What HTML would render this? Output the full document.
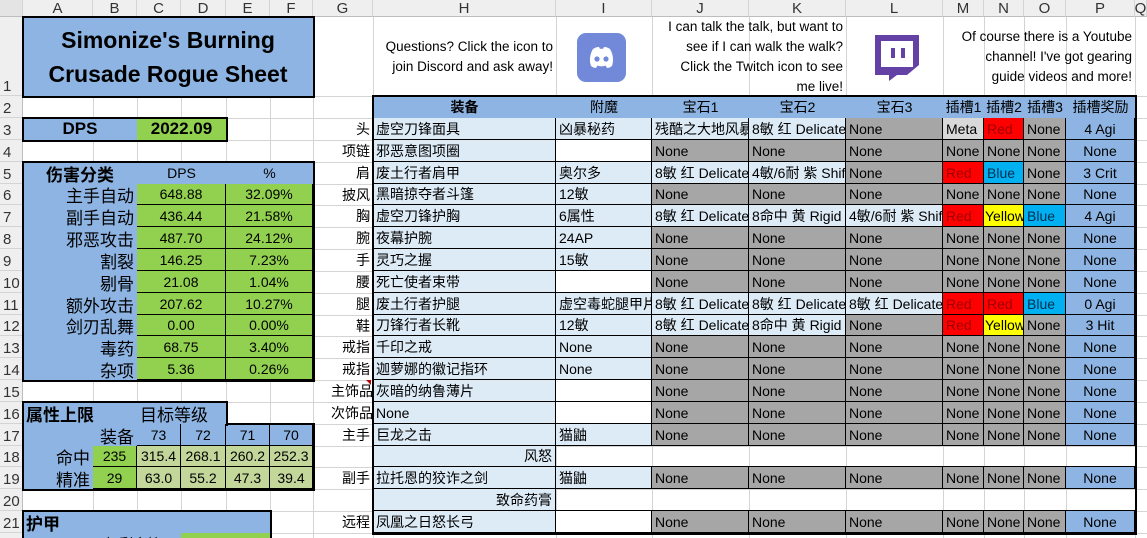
<!DOCTYPE html>
<html style="width:1147px;height:538px;overflow:hidden"><head><meta charset="utf-8"><style>
*{margin:0;padding:0}
body{width:1147px;height:538px;overflow:hidden;background:#fff;position:relative;font-family:"Liberation Sans","Noto Sans CJK SC",sans-serif;font-size:14px;color:#000}
.c{position:absolute;box-sizing:border-box;display:flex;align-items:center;white-space:nowrap;overflow:hidden;padding:0 3px}
.vl{position:absolute;top:0;width:1px;height:538px;background:#d4d4d4}
.hl{position:absolute;left:0;height:1px;width:1147px;background:#d4d4d4}
.tb{position:absolute;box-sizing:border-box;border:2px solid #000;pointer-events:none}
.ca{left:23px;width:70px}.cb{left:93px;width:44px}.cc{left:137px;width:44px}.cd{left:181px;width:45px}.ce{left:226px;width:44px}.cf{left:270px;width:43px}
.cg{left:313px;width:60px}.ch{left:373px;width:183px}.ci{left:556px;width:96px}.cj{left:652px;width:97px}.ck{left:749px;width:97px}.cl{left:846px;width:97px}
.cm{left:943px;width:41px}.cn{left:984px;width:40px}.co{left:1024px;width:42px}.cp{left:1066px;width:69px}
.r2{top:96px;height:22px}.r3{top:118px;height:22px}.r4{top:140px;height:22px}.r5{top:162px;height:22px}.r6{top:184px;height:21px}.r7{top:205px;height:22px}.r8{top:227px;height:22px}.r9{top:249px;height:22px}.r10{top:271px;height:22px}.r11{top:293px;height:22px}.r12{top:315px;height:21px}.r13{top:336px;height:22px}.r14{top:358px;height:22px}.r15{top:380px;height:22px}.r16{top:402px;height:22px}.r17{top:424px;height:22px}.r18{top:446px;height:21px}.r19{top:467px;height:22px}.r20{top:489px;height:22px}.r21{top:511px;height:22px}.r22{top:533px;height:22px}
.lb{background:#ddebf7}.gy{background:#a6a6a6}.bl{background:#8db4e2}.gr{background:#92d050}.lg{background:#c4d79b}.mt{background:#d9d9d9}.rd{background:#ff0000;color:#a00000}.bu{background:#00b0f0;color:#003050}.ye{background:#ffff00}.wh{background:#fff}
.bd{border-right:1px solid #000;border-bottom:1px solid #000}
.R{justify-content:flex-end}.C{justify-content:center}.B{font-weight:bold}
.hd{position:absolute;top:0;height:17px;background:#efefef;border-bottom:1px solid #bdbdbd;display:flex;align-items:center;justify-content:center;font-size:15px;color:#333;box-sizing:border-box;border-right:1px solid #d4d4d4}
.rn{position:absolute;left:0;width:23px;background:#efefef;font-size:15px;color:#333;box-sizing:border-box;border-right:1px solid #bdbdbd;border-bottom:1px solid #d4d4d4;display:flex;align-items:flex-end;padding-left:3px}
.t16{font-size:17px}
</style></head><body>
<div class="vl" style="left:93px"></div><div class="vl" style="left:137px"></div><div class="vl" style="left:181px"></div><div class="vl" style="left:226px"></div><div class="vl" style="left:270px"></div><div class="vl" style="left:313px"></div><div class="vl" style="left:373px"></div><div class="vl" style="left:556px"></div><div class="vl" style="left:652px"></div><div class="vl" style="left:749px"></div><div class="vl" style="left:846px"></div><div class="vl" style="left:943px"></div><div class="vl" style="left:984px"></div><div class="vl" style="left:1024px"></div><div class="vl" style="left:1066px"></div><div class="vl" style="left:1135px"></div>
<div class="hl" style="top:96px"></div><div class="hl" style="top:118px"></div><div class="hl" style="top:140px"></div><div class="hl" style="top:162px"></div><div class="hl" style="top:184px"></div><div class="hl" style="top:205px"></div><div class="hl" style="top:227px"></div><div class="hl" style="top:249px"></div><div class="hl" style="top:271px"></div><div class="hl" style="top:293px"></div><div class="hl" style="top:315px"></div><div class="hl" style="top:336px"></div><div class="hl" style="top:358px"></div><div class="hl" style="top:380px"></div><div class="hl" style="top:402px"></div><div class="hl" style="top:424px"></div><div class="hl" style="top:446px"></div><div class="hl" style="top:467px"></div><div class="hl" style="top:489px"></div><div class="hl" style="top:511px"></div><div class="hl" style="top:533px"></div>

<div class="hd" style="left:0;width:23px;background:#e4e4e4"></div>
<div class="hd" style="left:23px;width:70px">A</div><div class="hd" style="left:93px;width:44px">B</div><div class="hd" style="left:137px;width:44px">C</div><div class="hd" style="left:181px;width:45px">D</div><div class="hd" style="left:226px;width:44px">E</div><div class="hd" style="left:270px;width:43px">F</div><div class="hd" style="left:313px;width:60px">G</div><div class="hd" style="left:373px;width:183px">H</div><div class="hd" style="left:556px;width:96px">I</div><div class="hd" style="left:652px;width:97px">J</div><div class="hd" style="left:749px;width:97px">K</div><div class="hd" style="left:846px;width:97px">L</div><div class="hd" style="left:943px;width:41px">M</div><div class="hd" style="left:984px;width:40px">N</div><div class="hd" style="left:1024px;width:42px">O</div><div class="hd" style="left:1066px;width:69px">P</div><div class="hd" style="left:1135px;width:12px">Q</div>
<div class="rn" style="top:17px;height:79px">1</div>
<div class="rn r2">2</div><div class="rn r3">3</div><div class="rn r4">4</div><div class="rn r5">5</div><div class="rn r6">6</div><div class="rn r7">7</div><div class="rn r8">8</div><div class="rn r9">9</div><div class="rn r10">10</div><div class="rn r11">11</div><div class="rn r12">12</div><div class="rn r13">13</div><div class="rn r14">14</div><div class="rn r15">15</div><div class="rn r16">16</div><div class="rn r17">17</div><div class="rn r18">18</div><div class="rn r19">19</div><div class="rn r20">20</div><div class="rn r21">21</div><div class="rn r22">22</div>

<div class="c C B bl" style="left:23px;top:17px;width:290px;height:79px;font-size:23px;line-height:34px;white-space:normal;text-align:center">Simonize's Burning<br>Crusade Rogue Sheet</div>
<div class="tb" style="left:22px;top:16px;width:293px;height:82px"></div>
<div class="c R" style="left:373px;top:17px;width:183px;height:79px;white-space:normal;text-align:right;line-height:20px;font-size:13.5px">Questions? Click the icon to<br>join Discord and ask away!</div>
<svg style="position:absolute;left:577px;top:33px" width="49" height="49" viewBox="0 0 49 49"><rect width="49" height="49" rx="9" fill="#7289da"/><path d="M14 33 C12 27 13 21 16 16 C19 14 21 14 22 14 L23 16 C24 15.5 25 15.5 26 16 L27 14 C28 14 30 14 33 16 C36 21 37 27 35 33 C33 34.5 31 35 30 35 L28.5 32.5 C26 33.5 23 33.5 20.5 32.5 L19 35 C18 35 16 34.5 14 33 Z" fill="#fff"/><circle cx="20" cy="26" r="2.6" fill="#7289da"/><circle cx="29" cy="26" r="2.6" fill="#7289da"/></svg>
<div class="c R" style="left:652px;top:17px;width:194px;height:79px;white-space:normal;text-align:right;line-height:20px;font-size:13.5px;align-items:flex-start">I can talk the talk, but want to<br>see if I can walk the walk?<br>Click the Twitch icon to see<br>me live!</div>
<svg style="position:absolute;left:875px;top:35px" width="44" height="46" viewBox="0 0 44 46"><path d="M0 0 H44 V30 L32 40 H22 L14 46 V40 H0 Z" fill="#6441a5"/><rect x="6" y="6" width="32" height="26" fill="#fff"/><rect x="16" y="13" width="4" height="10" fill="#6441a5"/><rect x="26" y="13" width="4" height="10" fill="#6441a5"/></svg>
<div class="c R" style="left:943px;top:17px;width:192px;height:79px;white-space:normal;text-align:right;line-height:20px;font-size:13.5px">Of course there is a Youtube<br>channel! I've got gearing<br>guide videos and more!</div>

<div class="c C B bl r3" style="left:23px;width:114px;font-size:17px">DPS</div>
<div class="c C B gr r3" style="left:137px;width:89px;font-size:17px">2022.09</div>
<div class="tb" style="left:22px;top:117px;width:206px;height:25px"></div>
<div class="c C B bl r5 t16" style="left:23px;width:114px">伤害分类</div>
<div class="c C bl r5" style="left:137px;width:89px">DPS</div>
<div class="c C bl r5" style="left:226px;width:87px">%</div>
<div class="c bl" style="left:23px;top:184px;width:114px;height:196px"></div>
<div class="c R t16 r6" style="left:23px;width:114px">主手自动</div><div class="c C gr bd r6" style="left:137px;width:89px">648.88</div><div class="c C gr bd r6" style="left:226px;width:87px">32.09%</div>
<div class="c R t16 r7" style="left:23px;width:114px">副手自动</div><div class="c C gr bd r7" style="left:137px;width:89px">436.44</div><div class="c C gr bd r7" style="left:226px;width:87px">21.58%</div>
<div class="c R t16 r8" style="left:23px;width:114px">邪恶攻击</div><div class="c C gr bd r8" style="left:137px;width:89px">487.70</div><div class="c C gr bd r8" style="left:226px;width:87px">24.12%</div>
<div class="c R t16 r9" style="left:23px;width:114px">割裂</div><div class="c C gr bd r9" style="left:137px;width:89px">146.25</div><div class="c C gr bd r9" style="left:226px;width:87px">7.23%</div>
<div class="c R t16 r10" style="left:23px;width:114px">剔骨</div><div class="c C gr bd r10" style="left:137px;width:89px">21.08</div><div class="c C gr bd r10" style="left:226px;width:87px">1.04%</div>
<div class="c R t16 r11" style="left:23px;width:114px">额外攻击</div><div class="c C gr bd r11" style="left:137px;width:89px">207.62</div><div class="c C gr bd r11" style="left:226px;width:87px">10.27%</div>
<div class="c R t16 r12" style="left:23px;width:114px">剑刃乱舞</div><div class="c C gr bd r12" style="left:137px;width:89px">0.00</div><div class="c C gr bd r12" style="left:226px;width:87px">0.00%</div>
<div class="c R t16 r13" style="left:23px;width:114px">毒药</div><div class="c C gr bd r13" style="left:137px;width:89px">68.75</div><div class="c C gr bd r13" style="left:226px;width:87px">3.40%</div>
<div class="c R t16 r14" style="left:23px;width:114px">杂项</div><div class="c C gr bd r14" style="left:137px;width:89px">5.36</div><div class="c C gr bd r14" style="left:226px;width:87px">0.26%</div>
<div class="tb" style="left:22px;top:161px;width:293px;height:221px"></div>

<div class="c B bl r16 t16" style="left:23px;width:114px">属性上限</div>
<div class="c bl r16 t16" style="left:137px;width:89px">目标等级</div>
<div class="c bl" style="left:23px;top:424px;width:114px;height:65px"></div>
<div class="c R t16 r17" style="left:93px;width:44px">装备</div>
<div class="c C bl bd r17" style="left:137px;width:44px">73</div><div class="c C bl bd r17" style="left:181px;width:45px">72</div><div class="c C bl bd r17" style="left:226px;width:44px">71</div><div class="c C bl bd r17" style="left:270px;width:43px">70</div>
<div class="c R t16 r18" style="left:23px;width:70px">命中</div><div class="c C gr bd r18" style="left:93px;width:44px">235</div>
<div class="c C lg bd r18" style="left:137px;width:44px">315.4</div><div class="c C lg bd r18" style="left:181px;width:45px">268.1</div><div class="c C lg bd r18" style="left:226px;width:44px">260.2</div><div class="c C lg bd r18" style="left:270px;width:43px">252.3</div>
<div class="c R t16 r19" style="left:23px;width:70px">精准</div><div class="c C gr bd r19" style="left:93px;width:44px">29</div>
<div class="c C lg bd r19" style="left:137px;width:44px">63.0</div><div class="c C lg bd r19" style="left:181px;width:45px">55.2</div><div class="c C lg bd r19" style="left:226px;width:44px">47.3</div><div class="c C lg bd r19" style="left:270px;width:43px">39.4</div>
<div class="tb" style="left:22px;top:401px;width:206px;height:25px;border-bottom:none"></div>
<div class="tb" style="left:22px;top:423px;width:293px;height:68px;border-top:none"></div>
<div style="position:absolute;left:226px;top:423px;width:89px;height:2px;background:#000"></div>
<div class="c B bl r21 t16" style="left:23px;width:247px">护甲</div>
<div class="c bl r22" style="left:23px;width:158px;padding-left:68px">目标剩余护甲</div>
<div class="c gr r22" style="left:181px;width:89px"></div>
<div class="tb" style="left:22px;top:510px;width:250px;height:40px"></div>

<div class="c C B bl r2" style="left:373px;width:183px">装备</div><div class="c C bl r2" style="left:556px;width:96px">附魔</div><div class="c C bl r2" style="left:652px;width:97px">宝石1</div><div class="c C bl r2" style="left:749px;width:97px">宝石2</div><div class="c C bl r2" style="left:846px;width:97px">宝石3</div><div class="c C bl r2" style="left:943px;width:41px;padding:0">插槽1</div><div class="c C bl r2" style="left:984px;width:40px;padding:0">插槽2</div><div class="c C bl r2" style="left:1024px;width:42px;padding:0">插槽3</div><div class="c C bl r2" style="left:1066px;width:69px">插槽奖励</div>

<div class="c R cg r3">头</div><div class="c R cg r4">项链</div><div class="c R cg r5">肩</div><div class="c R cg r6">披风</div><div class="c R cg r7">胸</div><div class="c R cg r8">腕</div><div class="c R cg r9">手</div><div class="c R cg r10">腰</div><div class="c R cg r11">腿</div><div class="c R cg r12">鞋</div><div class="c R cg r13">戒指</div><div class="c R cg r14">戒指</div><div class="c R cg r15" style="padding:0">主饰品</div><div class="c R cg r16" style="padding:0">次饰品</div><div class="c R cg r17">主手</div><div class="c R cg r19">副手</div><div class="c R cg r21">远程</div>

<div class="c lb bd ch r3">虚空刀锋面具</div><div class="c lb bd ci r3">凶暴秘药</div><div class="c lb bd cj r3">残酷之大地风暴钻</div><div class="c lb bd ck r3">8敏 红 Delicate</div><div class="c gy bd cl r3">None</div><div class="c mt bd cm r3">Meta</div><div class="c rd bd cn r3">Red</div><div class="c gy bd co r3">None</div><div class="c C bl bd cp r3">4 Agi</div>
<div class="c lb bd ch r4">邪恶意图项圈</div><div class="c wh bd ci r4"></div><div class="c gy bd cj r4">None</div><div class="c gy bd ck r4">None</div><div class="c gy bd cl r4">None</div><div class="c gy bd cm r4">None</div><div class="c gy bd cn r4">None</div><div class="c gy bd co r4">None</div><div class="c C bl bd cp r4">None</div>
<div class="c lb bd ch r5">废土行者肩甲</div><div class="c lb bd ci r5">奥尔多</div><div class="c lb bd cj r5">8敏 红 Delicate</div><div class="c lb bd ck r5">4敏/6耐 紫 Shifting</div><div class="c gy bd cl r5">None</div><div class="c rd bd cm r5">Red</div><div class="c bu bd cn r5">Blue</div><div class="c gy bd co r5">None</div><div class="c C bl bd cp r5">3 Crit</div>
<div class="c lb bd ch r6">黑暗掠夺者斗篷</div><div class="c lb bd ci r6">12敏</div><div class="c gy bd cj r6">None</div><div class="c gy bd ck r6">None</div><div class="c gy bd cl r6">None</div><div class="c gy bd cm r6">None</div><div class="c gy bd cn r6">None</div><div class="c gy bd co r6">None</div><div class="c C bl bd cp r6">None</div>
<div class="c lb bd ch r7">虚空刀锋护胸</div><div class="c lb bd ci r7">6属性</div><div class="c lb bd cj r7">8敏 红 Delicate</div><div class="c lb bd ck r7">8命中 黄 Rigid D</div><div class="c lb bd cl r7">4敏/6耐 紫 Shifting</div><div class="c rd bd cm r7">Red</div><div class="c ye bd cn r7" style="padding:0 1px">Yellow</div><div class="c bu bd co r7">Blue</div><div class="c C bl bd cp r7">4 Agi</div>
<div class="c lb bd ch r8">夜幕护腕</div><div class="c lb bd ci r8">24AP</div><div class="c gy bd cj r8">None</div><div class="c gy bd ck r8">None</div><div class="c gy bd cl r8">None</div><div class="c gy bd cm r8">None</div><div class="c gy bd cn r8">None</div><div class="c gy bd co r8">None</div><div class="c C bl bd cp r8">None</div>
<div class="c lb bd ch r9">灵巧之握</div><div class="c lb bd ci r9">15敏</div><div class="c gy bd cj r9">None</div><div class="c gy bd ck r9">None</div><div class="c gy bd cl r9">None</div><div class="c gy bd cm r9">None</div><div class="c gy bd cn r9">None</div><div class="c gy bd co r9">None</div><div class="c C bl bd cp r9">None</div>
<div class="c lb bd ch r10">死亡使者束带</div><div class="c wh bd ci r10"></div><div class="c gy bd cj r10">None</div><div class="c gy bd ck r10">None</div><div class="c gy bd cl r10">None</div><div class="c gy bd cm r10">None</div><div class="c gy bd cn r10">None</div><div class="c gy bd co r10">None</div><div class="c C bl bd cp r10">None</div>
<div class="c lb bd ch r11">废土行者护腿</div><div class="c lb bd ci r11">虚空毒蛇腿甲片</div><div class="c lb bd cj r11">8敏 红 Delicate</div><div class="c lb bd ck r11">8敏 红 Delicate</div><div class="c lb bd cl r11">8敏 红 Delicate</div><div class="c rd bd cm r11">Red</div><div class="c rd bd cn r11">Red</div><div class="c bu bd co r11">Blue</div><div class="c C bl bd cp r11">0 Agi</div>
<div class="c lb bd ch r12">刀锋行者长靴</div><div class="c lb bd ci r12">12敏</div><div class="c lb bd cj r12">8敏 红 Delicate</div><div class="c lb bd ck r12">8命中 黄 Rigid D</div><div class="c gy bd cl r12">None</div><div class="c rd bd cm r12">Red</div><div class="c ye bd cn r12" style="padding:0 1px">Yellow</div><div class="c gy bd co r12">None</div><div class="c C bl bd cp r12">3 Hit</div>
<div class="c lb bd ch r13">千印之戒</div><div class="c lb bd ci r13">None</div><div class="c gy bd cj r13">None</div><div class="c gy bd ck r13">None</div><div class="c gy bd cl r13">None</div><div class="c gy bd cm r13">None</div><div class="c gy bd cn r13">None</div><div class="c gy bd co r13">None</div><div class="c C bl bd cp r13">None</div>
<div class="c lb bd ch r14">迦萝娜的徽记指环</div><div class="c lb bd ci r14">None</div><div class="c gy bd cj r14">None</div><div class="c gy bd ck r14">None</div><div class="c gy bd cl r14">None</div><div class="c gy bd cm r14">None</div><div class="c gy bd cn r14">None</div><div class="c gy bd co r14">None</div><div class="c C bl bd cp r14">None</div>
<div class="c lb bd ch r15">灰暗的纳鲁薄片</div><div class="c wh bd ci r15"></div><div class="c gy bd cj r15">None</div><div class="c gy bd ck r15">None</div><div class="c gy bd cl r15">None</div><div class="c gy bd cm r15">None</div><div class="c gy bd cn r15">None</div><div class="c gy bd co r15">None</div><div class="c C bl bd cp r15">None</div>
<div class="c lb bd ch r16">None</div><div class="c wh bd ci r16"></div><div class="c gy bd cj r16">None</div><div class="c gy bd ck r16">None</div><div class="c gy bd cl r16">None</div><div class="c gy bd cm r16">None</div><div class="c gy bd cn r16">None</div><div class="c gy bd co r16">None</div><div class="c C bl bd cp r16">None</div>
<div class="c lb bd ch r17">巨龙之击</div><div class="c lb bd ci r17">猫鼬</div><div class="c gy bd cj r17">None</div><div class="c gy bd ck r17">None</div><div class="c gy bd cl r17">None</div><div class="c gy bd cm r17">None</div><div class="c gy bd cn r17">None</div><div class="c gy bd co r17">None</div><div class="c C bl bd cp r17">None</div>
<div class="c R lb bd ch r18">风怒</div><div style="position:absolute;left:556px;top:466px;width:580px;height:1px;background:#000"></div>
<div class="c lb bd ch r19">拉托恩的狡诈之剑</div><div class="c lb bd ci r19">猫鼬</div><div class="c gy bd cj r19">None</div><div class="c gy bd ck r19">None</div><div class="c gy bd cl r19">None</div><div class="c gy bd cm r19">None</div><div class="c gy bd cn r19">None</div><div class="c gy bd co r19">None</div><div class="c C bl bd cp r19">None</div>
<div class="c R lb bd ch r20">致命药膏</div><div style="position:absolute;left:556px;top:510px;width:580px;height:1px;background:#000"></div>
<div class="c lb bd ch r21">凤凰之日怒长弓</div><div class="c wh bd ci r21"></div><div class="c gy bd cj r21">None</div><div class="c gy bd ck r21">None</div><div class="c gy bd cl r21">None</div><div class="c gy bd cm r21">None</div><div class="c gy bd cn r21">None</div><div class="c gy bd co r21">None</div><div class="c C bl bd cp r21">None</div>
<div class="tb" style="left:372px;top:95px;width:765px;height:440px"></div>
<div style="position:absolute;left:366px;top:380px;width:0;height:0;border-left:5px solid transparent;border-top:5px solid #c00000"></div>
</body></html>
